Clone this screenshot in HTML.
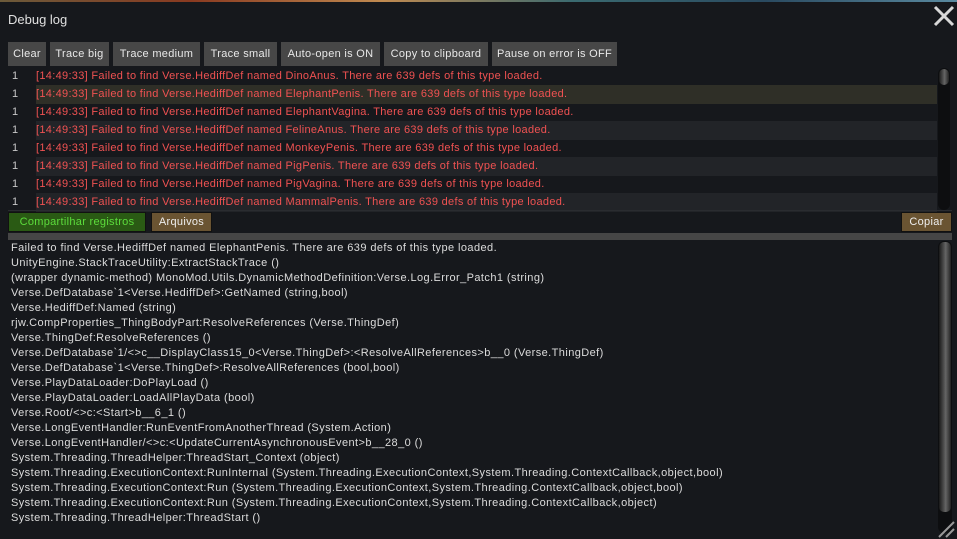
<!DOCTYPE html>
<html><head><style>
*{margin:0;padding:0;box-sizing:border-box}
body{width:957px;height:539px;background:#16181c;font-family:"Liberation Sans",sans-serif;position:relative;overflow:hidden;color:#dcdcdc}
.top{position:absolute;left:0;top:0;width:957px;height:2px;background:linear-gradient(90deg,#6b5a3a,#8a3a20 20%,#c08a50 40%,#3a6a70 60%,#2a4a60 80%,#5a8aa0)}
.title{position:absolute;left:8px;top:12px;font-size:13px;color:#e0e0e0}
.close{position:absolute;left:933px;top:5px}
.btn{position:absolute;top:42px;height:24px;background:#474747;color:#e8e8e8;font-size:11px;line-height:24px;text-align:center;letter-spacing:0.3px;white-space:nowrap}
.row{position:absolute;left:8px;width:929px;height:18px;font-size:11px;line-height:19px}
.row .n{position:absolute;left:4px;color:#c8c8c8}
.row .t{position:absolute;left:28px;right:0;color:#f05252;white-space:nowrap;letter-spacing:0.31px}
.row.alt .t{background:#222428}
.row.sel .t{background:#2f2f27}
.sb{position:absolute;background:#0d0e10;border-radius:6px}
.thumb{position:absolute;background:linear-gradient(90deg,#1a1a1a,#555 45%,#666 55%,#222);border-radius:5px}
.gbtn{position:absolute;top:212px;height:20px;font-size:11px;line-height:19px;text-align:center;border:1px solid #111;letter-spacing:0.3px}
.det{position:absolute;left:11px;top:241px;font-size:11px;line-height:15px;color:#dcdcdc;white-space:pre;letter-spacing:0.42px}
</style></head><body>
<div class="top"></div>
<div class="title">Debug log</div>
<svg class="close" width="22" height="22" viewBox="0 0 22 22"><path d="M2 2L20 20M20 2L2 20" stroke="#d8d8d8" stroke-width="3"/></svg>
<div class="btn" style="left:8px;width:38px">Clear</div>
<div class="btn" style="left:50px;width:59px">Trace big</div>
<div class="btn" style="left:113px;width:87px">Trace medium</div>
<div class="btn" style="left:204px;width:73px">Trace small</div>
<div class="btn" style="left:281px;width:99px">Auto-open is ON</div>
<div class="btn" style="left:384px;width:104px">Copy to clipboard</div>
<div class="btn" style="left:492px;width:125px">Pause on error is OFF</div>

<div class="row" style="top:67px"><span class="n">1</span><span class="t">[14:49:33] Failed to find Verse.HediffDef named DinoAnus. There are 639 defs of this type loaded.</span></div>
<div class="row sel" style="top:85px"><span class="n">1</span><span class="t">[14:49:33] Failed to find Verse.HediffDef named ElephantPenis. There are 639 defs of this type loaded.</span></div>
<div class="row" style="top:103px"><span class="n">1</span><span class="t">[14:49:33] Failed to find Verse.HediffDef named ElephantVagina. There are 639 defs of this type loaded.</span></div>
<div class="row alt" style="top:121px"><span class="n">1</span><span class="t">[14:49:33] Failed to find Verse.HediffDef named FelineAnus. There are 639 defs of this type loaded.</span></div>
<div class="row" style="top:139px"><span class="n">1</span><span class="t">[14:49:33] Failed to find Verse.HediffDef named MonkeyPenis. There are 639 defs of this type loaded.</span></div>
<div class="row alt" style="top:157px"><span class="n">1</span><span class="t">[14:49:33] Failed to find Verse.HediffDef named PigPenis. There are 639 defs of this type loaded.</span></div>
<div class="row" style="top:175px"><span class="n">1</span><span class="t">[14:49:33] Failed to find Verse.HediffDef named PigVagina. There are 639 defs of this type loaded.</span></div>
<div class="row alt" style="top:193px;height:17px"><span class="n">1</span><span class="t">[14:49:33] Failed to find Verse.HediffDef named MammalPenis. There are 639 defs of this type loaded.</span></div>
<div style="position:absolute;left:8px;top:210px;width:944px;height:1px;background:#2a2c30"></div>

<div class="sb" style="left:938px;top:68px;width:12px;height:142px"></div>
<div class="thumb" style="left:939px;top:69px;width:10px;height:16px"></div>

<div class="gbtn" style="left:8px;width:138px;background:#2a5a14;color:#5cdc3c">Compartilhar registros</div>
<div class="gbtn" style="left:151px;width:61px;background:#6a5432;color:#eee">Arquivos</div>
<div class="gbtn" style="left:901px;width:51px;background:#6a5432;color:#eee">Copiar</div>
<div style="position:absolute;left:8px;top:233px;width:944px;height:7px;background:#464646"></div>

<div class="det">Failed to find Verse.HediffDef named ElephantPenis. There are 639 defs of this type loaded.
UnityEngine.StackTraceUtility:ExtractStackTrace ()
(wrapper dynamic-method) MonoMod.Utils.DynamicMethodDefinition:Verse.Log.Error_Patch1 (string)
Verse.DefDatabase`1&lt;Verse.HediffDef&gt;:GetNamed (string,bool)
Verse.HediffDef:Named (string)
rjw.CompProperties_ThingBodyPart:ResolveReferences (Verse.ThingDef)
Verse.ThingDef:ResolveReferences ()
Verse.DefDatabase`1/&lt;&gt;c__DisplayClass15_0&lt;Verse.ThingDef&gt;:&lt;ResolveAllReferences&gt;b__0 (Verse.ThingDef)
Verse.DefDatabase`1&lt;Verse.ThingDef&gt;:ResolveAllReferences (bool,bool)
Verse.PlayDataLoader:DoPlayLoad ()
Verse.PlayDataLoader:LoadAllPlayData (bool)
Verse.Root/&lt;&gt;c:&lt;Start&gt;b__6_1 ()
Verse.LongEventHandler:RunEventFromAnotherThread (System.Action)
Verse.LongEventHandler/&lt;&gt;c:&lt;UpdateCurrentAsynchronousEvent&gt;b__28_0 ()
System.Threading.ThreadHelper:ThreadStart_Context (object)
System.Threading.ExecutionContext:RunInternal (System.Threading.ExecutionContext,System.Threading.ContextCallback,object,bool)
System.Threading.ExecutionContext:Run (System.Threading.ExecutionContext,System.Threading.ContextCallback,object,bool)
System.Threading.ExecutionContext:Run (System.Threading.ExecutionContext,System.Threading.ContextCallback,object)
System.Threading.ThreadHelper:ThreadStart ()</div>

<div class="sb" style="left:938px;top:241px;width:14px;height:292px"></div>
<div class="thumb" style="left:939px;top:242px;width:12px;height:270px"></div>
<svg style="position:absolute;left:937px;top:520px" width="20" height="19"><path d="M2 17L17 2M9 17L17 9" stroke="#999" stroke-width="2"/></svg>
</body></html>
